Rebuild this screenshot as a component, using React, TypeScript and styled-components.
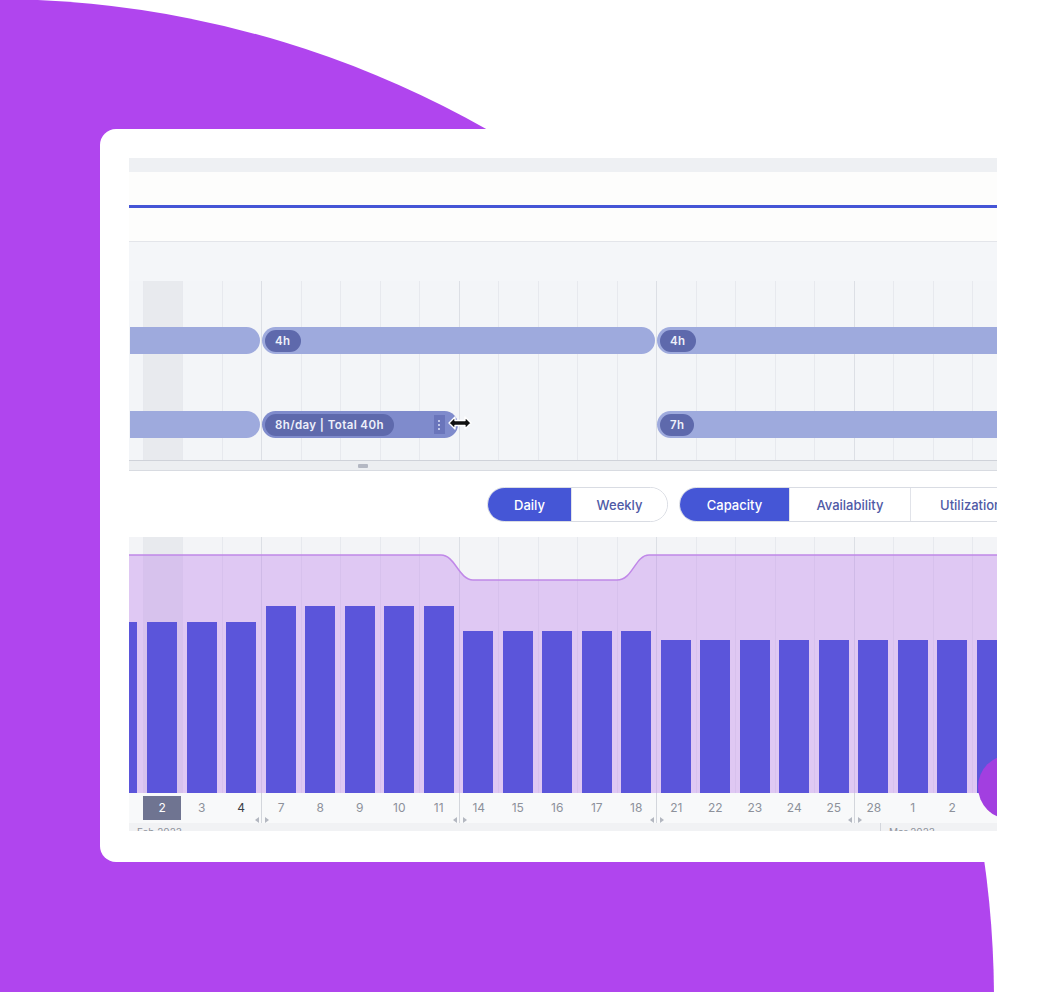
import React from 'react';
import styled, { createGlobalStyle } from 'styled-components';

const GlobalStyle = createGlobalStyle`
  *, *::before, *::after {
    box-sizing: border-box;
  }
  html, body {
    margin: 0;
    padding: 0;
    background: #ffffff;
  }
  body {
    font-family: Inter, 'Noto Sans', 'Liberation Sans', sans-serif;
  }
`;

// one partial column on the left, then 22 day columns
const COLS = '13.5px repeat(22, 39.5px)';
const WEEK_STARTS = [4, 9, 14, 19];
const TODAY = 1;

const dates = ['', '2', '3', '4', '7', '8', '9', '10', '11', '14', '15', '16', '17', '18', '21', '22', '23', '24', '25', '28', '1', '2', '3'];

const chartHeights = [171, 171, 171, 171, 187, 187, 187, 187, 187, 162, 162, 162, 162, 162, 153, 153, 153, 153, 153, 153, 153, 153, 153];

const Page = styled.div`
  position: relative;
  width: 1040px;
  height: 992px;
  overflow: hidden;
  background: #ffffff;
`;

const Blob = styled.div`
  position: absolute;
  left: -1008px;
  top: -1px;
  width: 2002px;
  height: 2002px;
  border-radius: 50%;
  background: #b045ee;
`;

const Card = styled.div`
  position: relative;
  margin: 129px 0 0 100px;
  width: 1000px;
  height: 733px;
  padding: 29px 0 0 29px;
  background: #ffffff;
  border-radius: 16px 0 0 16px;
`;

const Frame = styled.div`
  position: relative;
  width: 868px;
  height: 673px;
  overflow: hidden;
  display: flex;
  flex-direction: column;
  & > * {
    flex-shrink: 0;
  }
`;

const TopStrip = styled.div`
  height: 14px;
  background: #eef0f3;
`;

const Header = styled.div`
  height: 70px;
  padding-top: 33px;
  background: #fdfdfc;
  border-bottom: 1px solid #e3e5ea;
`;

const BlueLine = styled.div`
  height: 3px;
  background: #4555d6;
`;

const DayHeader = styled.div`
  height: 39px;
  background: #f4f6f9;
`;

const TimeGrid = styled.div`
  display: grid;
  grid-template-columns: ${COLS};
`;

const ColumnLayer = styled(TimeGrid)`
  position: absolute;
  inset: 0;
`;

const ColumnCell = styled.div<{ $week: boolean; $today: boolean; $first: boolean }>`
  border-left: ${(p) => (p.$first ? 'none' : `1px solid ${p.$week ? '#dcdfe5' : '#e7e9ee'}`)};
  background: ${(p) => (p.$today ? '#e8eaee' : 'transparent')};
`;

const GanttArea = styled.div`
  position: relative;
  height: 179px;
  background: #f3f5f8;
`;

const GanttRows = styled.div`
  position: relative;
  display: flex;
  flex-direction: column;
  gap: 57px;
  padding-top: 46px;
`;

const BarRow = styled(TimeGrid)`
  height: 27px;
`;

const Segment = styled.div<{ $from: number; $to: number; $selected?: boolean; $clipLeft?: boolean }>`
  position: relative;
  grid-column: ${(p) => p.$from} / ${(p) => p.$to};
  margin: 0 1px;
  display: flex;
  align-items: center;
  padding-left: 3px;
  background: ${(p) => (p.$selected ? '#7f8bcc' : '#9eaadd')};
  border-radius: ${(p) => (p.$clipLeft ? '0 14px 14px 0' : '14px')};
`;

const Pill = styled.span`
  height: 22px;
  line-height: 22px;
  padding: 0 10px;
  border-radius: 11px;
  background: #5e69ac;
  color: #eef0fa;
  font-size: 11.5px;
  font-weight: 600;
  letter-spacing: 0.4px;
  white-space: nowrap;
`;

const Handle = styled.div`
  position: absolute;
  right: 13px;
  top: 4px;
  width: 11px;
  height: 19px;
  background: #6a75bb;
  display: flex;
  flex-direction: column;
  align-items: center;
  justify-content: center;
  gap: 2px;
`;

const Dot = styled.span`
  width: 2px;
  height: 2px;
  border-radius: 1px;
  background: #dfe3f7;
`;

const Cursor = styled.svg`
  position: absolute;
  right: -14px;
  top: 4px;
`;

const ScrollBar = styled.div`
  height: 11px;
  border-top: 1px solid #cfd2d9;
  border-bottom: 1px solid #d8dbe1;
  background: #eceef1;
  padding-left: 229px;
  display: flex;
  align-items: center;
`;

const Thumb = styled.div`
  width: 10px;
  height: 4px;
  border-radius: 1px;
  background: #b4b8c3;
`;

const Toolbar = styled.div`
  height: 66px;
  padding: 16px 0 0 358px;
  display: flex;
  gap: 11px;
  background: #ffffff;
`;

const Segmented = styled.div`
  display: flex;
  height: 35px;
  flex-shrink: 0;
  border: 1px solid #d9dce3;
  border-radius: 18px;
  overflow: hidden;
`;

const SegButton = styled.div<{ $active?: boolean; $w: number }>`
  width: ${(p) => p.$w}px;
  display: flex;
  align-items: center;
  justify-content: center;
  font-size: 13px;
  font-weight: 500;
  color: ${(p) => (p.$active ? '#ffffff' : '#4f5aa6')};
  background: ${(p) => (p.$active ? '#4556d6' : '#ffffff')};
  & + & {
    border-left: 1px solid #e1e3e9;
  }
`;

const ChartArea = styled.div`
  position: relative;
  height: 256px;
  background: #f3f4f7;
`;

const AreaSvg = styled.svg`
  position: absolute;
  left: 0;
  top: 0;
`;

const BarGrid = styled(TimeGrid)`
  position: relative;
  height: 100%;
  align-items: end;
`;

const ChartBar = styled.div<{ $partial?: boolean }>`
  justify-self: ${(p) => (p.$partial ? 'start' : 'center')};
  width: ${(p) => (p.$partial ? '8px' : '30px')};
  background: #5b55da;
`;

const DateRow = styled(TimeGrid)`
  height: 30px;
  background: #f8f9fa;
`;

const DateCell = styled.div<{ $week: boolean }>`
  position: relative;
  display: flex;
  align-items: center;
  justify-content: center;
  border-left: ${(p) => (p.$week ? '1px solid #d3d6dc' : 'none')};
`;

const DateLabel = styled.span<{ $today?: boolean; $dark?: boolean }>`
  width: ${(p) => (p.$today ? '38px' : 'auto')};
  height: 24px;
  line-height: 24px;
  text-align: center;
  font-size: 12px;
  color: ${(p) => (p.$today ? '#ffffff' : p.$dark ? '#3c3f48' : '#8d919b')};
  background: ${(p) => (p.$today ? '#6f7491' : 'transparent')};
`;

const Arrows = styled.svg`
  position: absolute;
  left: -8px;
  bottom: -1px;
`;

const MonthStrip = styled.div`
  height: 8px;
  overflow: hidden;
  display: flex;
  background: #f1f2f4;
`;

const MonthLabel = styled.span<{ $w: number }>`
  width: ${(p) => p.$w}px;
  padding: 3px 0 0 8px;
  font-size: 10px;
  line-height: 12px;
  color: #8d919b;
  & + & {
    border-left: 1px solid #d3d6dc;
  }
`;

const ChatBubble = styled.div`
  position: absolute;
  left: 849px;
  top: 597px;
  width: 64px;
  height: 64px;
  border-radius: 50%;
  background: #a23fe0;
`;

const Columns: React.FC = () => (
  <ColumnLayer>
    {dates.map((_, i) => (
      <ColumnCell key={i} $first={i === 0} $week={WEEK_STARTS.includes(i)} $today={i === TODAY} />
    ))}
  </ColumnLayer>
);

export default function App() {
  return (
    <>
      <GlobalStyle />
      <Page>
        <Blob />
        <Card>
          <Frame>
            <TopStrip />
            <Header>
              <BlueLine />
            </Header>
            <DayHeader />

            <GanttArea>
              <Columns />
              <GanttRows>
                <BarRow>
                  <Segment $from={1} $to={5} $clipLeft />
                  <Segment $from={5} $to={15}>
                    <Pill>4h</Pill>
                  </Segment>
                  <Segment $from={15} $to={-1}>
                    <Pill>4h</Pill>
                  </Segment>
                </BarRow>
                <BarRow>
                  <Segment $from={1} $to={5} $clipLeft />
                  <Segment $from={5} $to={10} $selected>
                    <Pill>8h/day | Total 40h</Pill>
                    <Handle>
                      <Dot />
                      <Dot />
                      <Dot />
                    </Handle>
                    <Cursor width="24" height="16" viewBox="0 0 24 16">
                      <path
                        d="M1 8 L7 2 L7 5.5 L17 5.5 L17 2 L23 8 L17 14 L17 10.5 L7 10.5 L7 14 Z"
                        fill="#111"
                        stroke="#fff"
                        strokeWidth="1.4"
                        strokeLinejoin="round"
                      />
                    </Cursor>
                  </Segment>
                  <Segment $from={15} $to={-1}>
                    <Pill>7h</Pill>
                  </Segment>
                </BarRow>
              </GanttRows>
            </GanttArea>

            <ScrollBar>
              <Thumb />
            </ScrollBar>

            <Toolbar>
              <Segmented>
                <SegButton $active $w={83}>Daily</SegButton>
                <SegButton $w={96}>Weekly</SegButton>
              </Segmented>
              <Segmented>
                <SegButton $active $w={109}>Capacity</SegButton>
                <SegButton $w={121}>Availability</SegButton>
                <SegButton $w={121}>Utilization</SegButton>
              </Segmented>
            </Toolbar>

            <ChartArea>
              <Columns />
              <AreaSvg width="868" height="256" viewBox="0 0 868 256">
                <path
                  d="M0 18 H312 C326 18 330 43 344 43 H488 C504 43 506 18 520 18 H868 V256 H0 Z"
                  fill="rgba(180,110,235,0.32)"
                />
                <path
                  d="M0 18 H312 C326 18 330 43 344 43 H488 C504 43 506 18 520 18 H868"
                  fill="none"
                  stroke="#c088e8"
                  strokeWidth="1.5"
                />
              </AreaSvg>
              <BarGrid>
                {chartHeights.map((h, i) => (
                  <ChartBar key={i} $partial={i === 0} style={{ height: h }} />
                ))}
              </BarGrid>
            </ChartArea>

            <DateRow>
              {dates.map((d, i) => (
                <DateCell key={i} $week={WEEK_STARTS.includes(i)}>
                  {WEEK_STARTS.includes(i) && (
                    <Arrows width="16" height="8" viewBox="0 0 16 8">
                      <path d="M5 1 L1 4 L5 7 Z" fill="#b3b7c0" />
                      <path d="M11 1 L15 4 L11 7 Z" fill="#b3b7c0" />
                    </Arrows>
                  )}
                  <DateLabel $today={i === TODAY} $dark={i === 3}>
                    {d}
                  </DateLabel>
                </DateCell>
              ))}
            </DateRow>

            <MonthStrip>
              <MonthLabel $w={751}>Feb 2023</MonthLabel>
              <MonthLabel $w={117}>Mar 2023</MonthLabel>
            </MonthStrip>

            <ChatBubble />
          </Frame>
        </Card>
      </Page>
    </>
  );
}
